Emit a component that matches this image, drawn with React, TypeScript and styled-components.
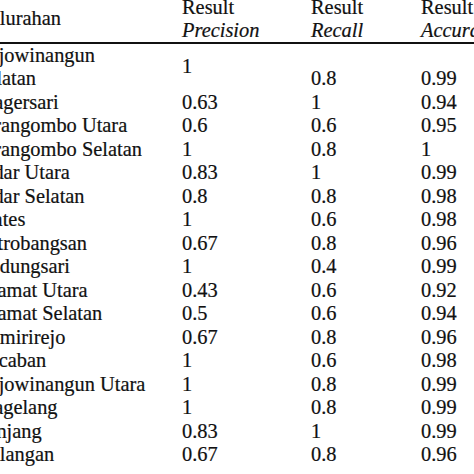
import styled, { createGlobalStyle } from "styled-components";

interface RowData {
  name: string;
  precision: string;
  recall: string;
  accuracy: string;
}

const rows: RowData[] = [
  { name: "Rejowinangun Selatan", precision: "1", recall: "0.8", accuracy: "0.99" },
  { name: "Magersari", precision: "0.63", recall: "1", accuracy: "0.94" },
  { name: "Jurangombo Utara", precision: "0.6", recall: "0.6", accuracy: "0.95" },
  { name: "Jurangombo Selatan", precision: "1", recall: "0.8", accuracy: "1" },
  { name: "Tidar Utara", precision: "0.83", recall: "1", accuracy: "0.99" },
  { name: "Tidar Selatan", precision: "0.8", recall: "0.8", accuracy: "0.98" },
  { name: "Wates", precision: "1", recall: "0.6", accuracy: "0.98" },
  { name: "Potrobangsan", precision: "0.67", recall: "0.8", accuracy: "0.96" },
  { name: "Kedungsari", precision: "1", recall: "0.4", accuracy: "0.99" },
  { name: "Kramat Utara", precision: "0.43", recall: "0.6", accuracy: "0.92" },
  { name: "Kramat Selatan", precision: "0.5", recall: "0.6", accuracy: "0.94" },
  { name: "Kemirirejo", precision: "0.67", recall: "0.8", accuracy: "0.96" },
  { name: "Cacaban", precision: "1", recall: "0.6", accuracy: "0.98" },
  { name: "Rejowinangun Utara", precision: "1", recall: "0.8", accuracy: "0.99" },
  { name: "Magelang", precision: "1", recall: "0.8", accuracy: "0.99" },
  { name: "Panjang", precision: "0.83", recall: "1", accuracy: "0.99" },
  { name: "Gelangan", precision: "0.67", recall: "0.8", accuracy: "0.96" },
];

const App = () => {
  return (
    <>
      <GlobalStyle />
      <Page>
        <Table>
          <HeaderRow>
            <Cell $align="center">Kelurahan</Cell>
            <Cell>
              Result
              <br />
              <em>Precision</em>
            </Cell>
            <Cell>
              Result
              <br />
              <em>Recall</em>
            </Cell>
            <Cell>
              Result
              <br />
              <em>Accuracy</em>
            </Cell>
          </HeaderRow>
          {rows.map((row) => (
            <Row key={row.name}>
              <NameCell>{row.name}</NameCell>
              <Cell $align="center">{row.precision}</Cell>
              <Cell $align="end">{row.recall}</Cell>
              <Cell $align="end">{row.accuracy}</Cell>
            </Row>
          ))}
        </Table>
      </Page>
    </>
  );
};

export default App;

const GlobalStyle = createGlobalStyle`
  html, body {
    margin: 0;
    padding: 0;
    background: #fff;
    overflow: hidden;
  }
`;

const Page = styled.div`
  width: 474px;
  height: 474px;
  overflow: hidden;
  background: #fff;
`;

// the reference is a crop of a wider table, so the table starts off the page
const Table = styled.div`
  width: 560px;
  margin-left: -24px;
  margin-top: -4.2px;
  font-family: "Liberation Serif", "Times New Roman", serif;
  font-size: 20.4px;
  line-height: 23.5px;
  color: #111;
  -webkit-text-stroke: 0.2px #111;
`;

const columns = `206px 129px 110px 1fr`;

const HeaderRow = styled.div`
  display: grid;
  grid-template-columns: ${columns};
  line-height: 22.7px;
  padding-bottom: 0.5px;
  border-bottom: 2px solid #111;

  em {
    font-style: italic;
  }
`;

const Row = styled.div`
  display: grid;
  grid-template-columns: ${columns};
`;

const Cell = styled.div<{ $align?: "start" | "center" | "end" }>`
  align-self: ${({ $align }) => $align ?? "start"};
  white-space: nowrap;
`;

const NameCell = styled.div`
  padding-right: 30px;
`;
